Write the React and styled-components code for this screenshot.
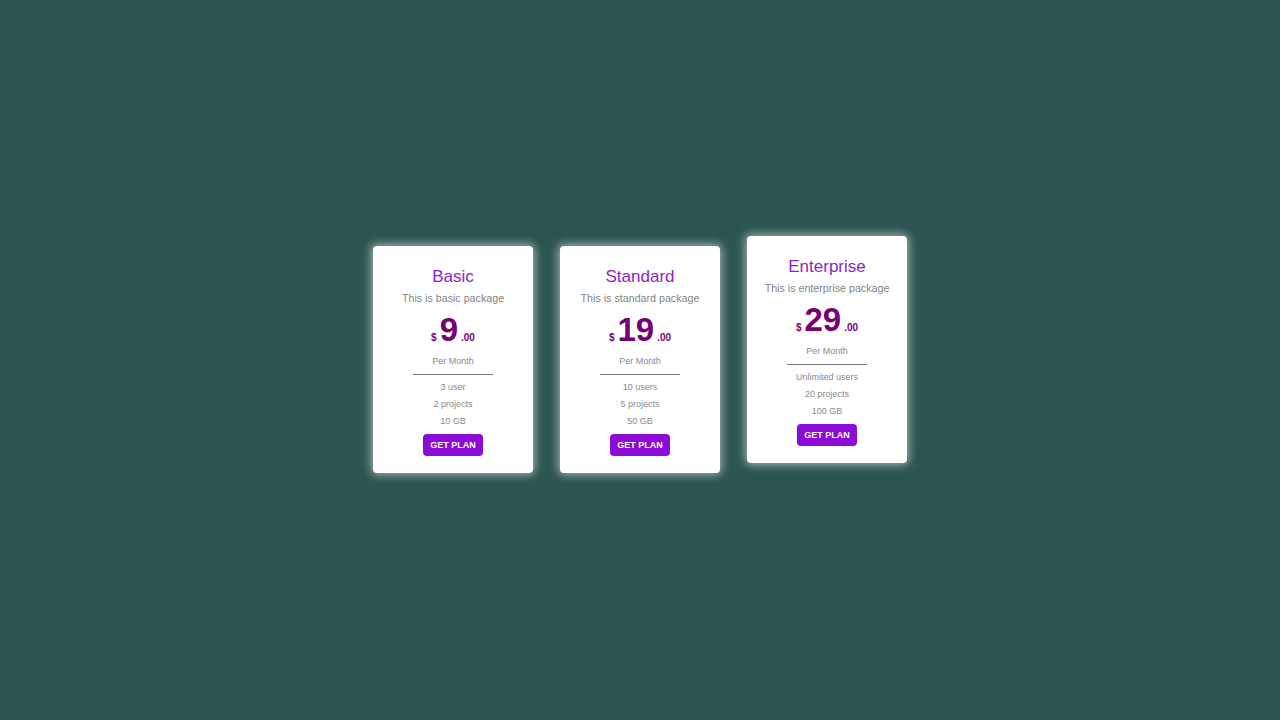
import React from 'react';
import styled, { createGlobalStyle } from 'styled-components';

const GlobalStyle = createGlobalStyle`
    html, body {
        margin: 0;
        padding: 0;
        background: #2c5450;
        font-family: "Liberation Sans", Arial, sans-serif;
    }
    * {
        box-sizing: border-box;
    }
`

const Page = styled.div`
    display: flex;
    justify-content: center;
    align-items: center;
    gap: 27px;
    width: 100%;
    height: 719px;
`

// 价格卡片
const Card = styled.div`
    display: flex;
    flex-direction: column;
    align-items: center;
    width: 160px;
    padding: 20px 10px 17px;
    background: #fff;
    border-radius: 4px;
    box-shadow: 0 0 10px 2px rgba(255, 255, 255, .55);
    transform: translateY(${props => props.raised ? -10 : 0}px);
`

const Title = styled.h2`
    margin: 0;
    font-size: 17px;
    font-weight: 400;
    line-height: 22px;
    color: #8c1fc9;
`

const Desc = styled.p`
    margin: 3px 0 0;
    font-size: 10.7px;
    line-height: 14px;
    color: #838383;
    white-space: nowrap;
`

const Price = styled.div`
    display: flex;
    align-items: baseline;
    margin-top: 7px;
    color: #770077;
    font-weight: 700;
    line-height: 35px;
`

const Small = styled.span`
    font-size: 10px;
    margin: 0 3px;
`

const Big = styled.span`
    font-size: 33px;
`

const Period = styled.div`
    font-size: 9px;
    line-height: 12px;
    color: #8a8a8a;
`

const Divider = styled.hr`
    width: 80px;
    margin: 7px 0 4px;
    border: 0;
    border-top: 1px solid #777;
`

const Features = styled.ul`
    list-style: none;
    margin: 0;
    padding: 0;
    text-align: center;
`

const Feature = styled.li`
    font-size: 9px;
    line-height: 17px;
    color: #8a8a8a;
`

const Button = styled.button`
    margin-top: 4px;
    padding: 0 7px;
    height: 22px;
    border: 0;
    border-radius: 4px;
    background: #8e0bd6;
    color: #fff;
    font-family: inherit;
    font-size: 9px;
    font-weight: 700;
    cursor: pointer;
`

const plans = [
    { name: 'Basic', desc: 'This is basic package', price: 9, features: ['3 user', '2 projects', '10 GB'] },
    { name: 'Standard', desc: 'This is standard package', price: 19, features: ['10 users', '5 projects', '50 GB'] },
    { name: 'Enterprise', desc: 'This is enterprise package', price: 29, features: ['Unlimited users', '20 projects', '100 GB'], raised: true },
]

export default function App() {
    return (
        <>
            <GlobalStyle />
            <Page>
                {plans.map(plan => (
                    <Card key={plan.name} raised={plan.raised}>
                        <Title>{plan.name}</Title>
                        <Desc>{plan.desc}</Desc>
                        <Price>
                            <Small>$</Small>
                            <Big>{plan.price}</Big>
                            <Small>.00</Small>
                        </Price>
                        <Period>Per Month</Period>
                        <Divider />
                        <Features>
                            {plan.features.map(f => <Feature key={f}>{f}</Feature>)}
                        </Features>
                        <Button>GET PLAN</Button>
                    </Card>
                ))}
            </Page>
        </>
    )
}
